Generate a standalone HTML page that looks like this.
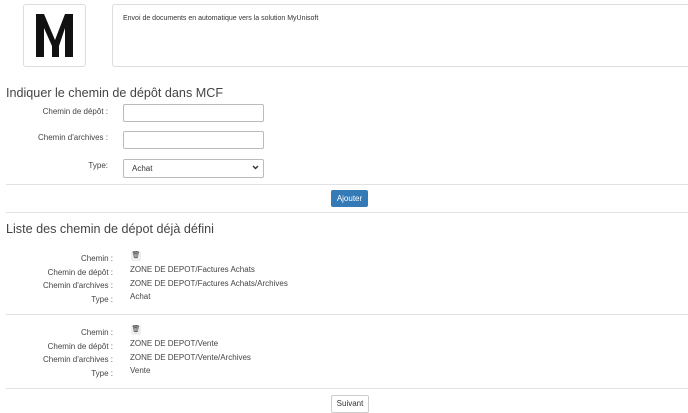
<!DOCTYPE html>
<html><head><meta charset="utf-8"><style>
body{margin:0;width:688px;height:412px;background:#fff;font-family:"Liberation Sans",sans-serif;color:#333;position:relative;overflow:hidden}
.a{position:absolute}
.box{border:1px solid #ddd;border-radius:3px}
.lbl{font-size:8px;text-align:right;color:#444}
.in{border:1px solid #bbb;border-radius:2px;background:#fff}
hr{position:absolute;margin:0;border:0;border-top:1px solid #e2e2e2;left:6px;width:682px}
.v{font-size:8px;color:#444}
.h{font-size:12.6px;color:#444}
</style></head><body>
<div class="a box" style="left:23px;top:4px;width:61px;height:61px"></div>
<svg class="a" style="left:36px;top:14px" width="37" height="43" viewBox="0 0 37 43"><path d="M0 0H8L19 26L29 0H37V43H29V14L23 32V43H16V32L8 14V43H0Z" fill="#111"/></svg>
<div class="a box" style="left:112px;top:4px;width:590px;height:61px"></div>
<div class="a" style="left:123px;top:15px;font-size:7px">Envoi de documents en automatique vers la solution MyUnisoft</div>
<div class="a h" style="left:6px;top:86px">Indiquer le chemin de dépôt dans MCF</div>
<div class="a lbl" style="left:0;width:108px;top:107px">Chemin de dépôt :</div>
<div class="a in" style="left:123px;top:104px;width:139px;height:16px"></div>
<div class="a lbl" style="left:0;width:108px;top:133px">Chemin d'archives :</div>
<div class="a in" style="left:123px;top:131px;width:139px;height:16px"></div>
<div class="a lbl" style="left:0;width:108px;top:161px">Type:</div>
<div class="a in" style="left:123px;top:159px;width:139px;height:17px"></div>
<div class="a" style="left:132px;top:164px;font-size:8px">Achat</div>
<svg class="a" style="left:252px;top:165px" width="7" height="5"><path d="M1 1L3.5 3.5L6 1" stroke="#333" stroke-width="1.4" fill="none"/></svg>
<hr style="top:184px">
<div class="a" style="left:331px;top:190px;width:37px;height:17px;background:#337ab7;border-radius:2px;color:#fff;font-size:8px;text-align:center;line-height:17px">Ajouter</div>
<hr style="top:212px">
<div class="a h" style="left:6px;top:222px">Liste des chemin de dépot déjà défini</div>
<div class="a lbl" style="left:0;width:113px;top:252px;line-height:13.5px">Chemin :<br>Chemin de dépôt :<br>Chemin d'archives :<br>Type :</div>
<div class="a" style="left:131px;top:251px;width:10px;height:10px;background:#eee;border-radius:2px;font-size:7px;text-align:center;line-height:10px">🗑</div>
<div class="a v" style="left:130px;top:263px;line-height:13.5px">ZONE DE DEPOT/Factures Achats<br>ZONE DE DEPOT/Factures Achats/Archives<br>Achat</div>
<hr style="top:314px">
<div class="a lbl" style="left:0;width:113px;top:326px;line-height:13.5px">Chemin :<br>Chemin de dépôt :<br>Chemin d'archives :<br>Type :</div>
<div class="a" style="left:131px;top:325px;width:10px;height:10px;background:#eee;border-radius:2px;font-size:7px;text-align:center;line-height:10px">🗑</div>
<div class="a v" style="left:130px;top:337px;line-height:13.5px">ZONE DE DEPOT/Vente<br>ZONE DE DEPOT/Vente/Archives<br>Vente</div>
<hr style="top:388px">
<div class="a" style="left:331px;top:395px;width:36px;height:16px;border:1px solid #ccc;border-radius:2px;font-size:8px;text-align:center;line-height:16px">Suivant</div>
</body></html>
